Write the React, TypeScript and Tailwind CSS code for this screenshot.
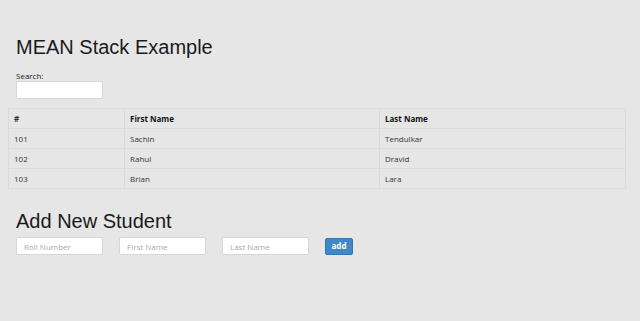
import React from "react";

const students = [
  { roll: "101", first: "Sachin", last: "Tendulkar" },
  { roll: "102", first: "Rahul", last: "Dravid" },
  { roll: "103", first: "Brian", last: "Lara" },
];

const App = () => {
  return (
    <div className="w-[640px] h-[321px] bg-[#e6e6e6] font-['Open_Sans',sans-serif] text-[#333]">
      <div className="pt-[35px] pl-4">
        <h1 className="font-['Liberation_Sans',sans-serif] text-[20px] leading-[24px] text-[#1a1a1a]">
          MEAN Stack Example
        </h1>
        <div className="mt-[12px] text-[8px] leading-[10px] text-[#222]">Search:</div>
        <input className="block w-[87px] h-[18px] bg-white border border-[#d6d6d6] rounded-[2px]" />
      </div>

      <div className="px-2 mt-[9px]">
        <table className="w-[618px] border-collapse text-[8px] text-[#333]">
          <thead>
            <tr className="h-[20px]">
              <th className="w-[116px] border border-[#dadada] pl-[5px] text-left font-bold">#</th>
              <th className="w-[255px] border border-[#dadada] pl-[5px] text-left font-bold text-[#111]">First Name</th>
              <th className="border border-[#dadada] pl-[5px] text-left font-bold text-[#111]">Last Name</th>
            </tr>
          </thead>
          <tbody>
            {students.map((s) => (
              <tr key={s.roll} className="h-[20px]">
                <td className="border border-[#dadada] pl-[5px]">{s.roll}</td>
                <td className="border border-[#dadada] pl-[5px]">{s.first}</td>
                <td className="border border-[#dadada] pl-[5px]">{s.last}</td>
              </tr>
            ))}
          </tbody>
        </table>
      </div>

      <div className="pl-4 mt-[20px]">
        <h2 className="font-['Liberation_Sans',sans-serif] text-[20px] leading-[24px] text-[#1a1a1a]">
          Add New Student
        </h2>
        <div className="mt-[4px] flex items-center gap-4">
          <input placeholder="Roll Number" className="w-[87px] h-[18px] bg-white border border-[#d6d6d6] rounded-[2px] px-[7px] text-[8px] placeholder:text-[#aaa]" />
          <input placeholder="First Name" className="w-[87px] h-[18px] bg-white border border-[#d6d6d6] rounded-[2px] px-[7px] text-[8px] placeholder:text-[#aaa]" />
          <input placeholder="Last Name" className="w-[87px] h-[18px] bg-white border border-[#d6d6d6] rounded-[2px] px-[7px] text-[8px] placeholder:text-[#aaa]" />
          <button className="w-[28px] h-[17px] bg-[#3f87c9] border border-[#3276b1] rounded-[2px] text-white text-[8px] font-bold leading-none">
            add
          </button>
        </div>
      </div>
    </div>
  );
};

export default App;
